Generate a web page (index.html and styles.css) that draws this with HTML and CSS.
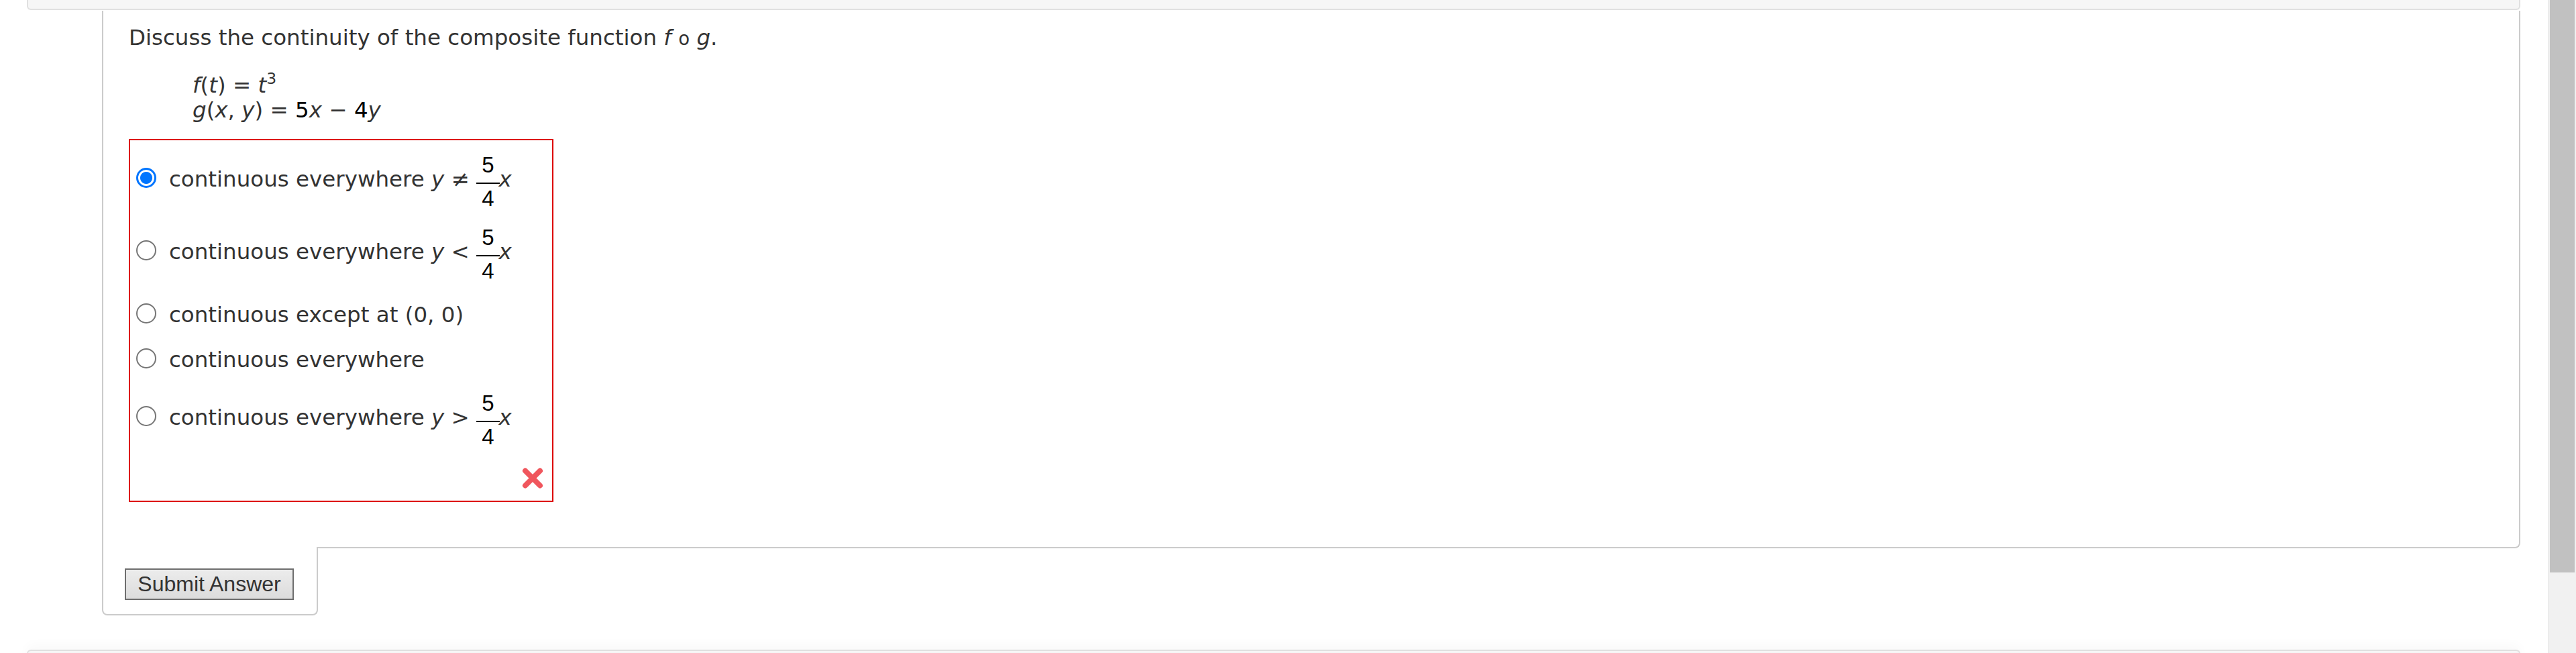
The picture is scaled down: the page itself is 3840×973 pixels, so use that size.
FILE: index.html
```html
<!DOCTYPE html>
<html lang="en">
<head>
<meta charset="utf-8">
<title>Question</title>
<link rel="stylesheet" href="styles.css">
</head>
<body>
<div class="page">
  <div class="content">
    <div class="prev-box"></div>
    <div class="question">
      <p class="prompt">Discuss the continuity of the composite function <i>f</i> <span class="compose">o</span> <i>g</i>.</p>
      <div class="equations">
        <div class="eq"><i>f</i>(<i>t</i>) = <i>t</i><sup>3</sup></div>
        <div class="eq"><i>g</i>(<i>x</i>, <i>y</i>) = <span class="n">5</span><i>x</i> &minus; <span class="n">4</span><i>y</i></div>
      </div>
      <div class="answers">
        <div class="opt opt-first"><span class="radio checked"></span>continuous everywhere <i>y</i> &ne; <span class="frac"><span class="num">5</span><span class="den">4</span></span><i>x</i></div>
        <div class="opt"><span class="radio"></span>continuous everywhere <i>y</i> &lt; <span class="frac"><span class="num">5</span><span class="den">4</span></span><i>x</i></div>
        <div class="opt"><span class="radio"></span>continuous except at (0, 0)</div>
        <div class="opt"><span class="radio"></span>continuous everywhere</div>
        <div class="opt opt-last"><span class="radio"></span>continuous everywhere <i>y</i> &gt; <span class="frac"><span class="num">5</span><span class="den">4</span></span><i>x</i></div>
        <div class="feedback">
          <svg class="wrong" width="34" height="33" viewBox="0 0 34 33" aria-label="incorrect">
            <path d="M6 5.5 L28 27.5 M28 5.5 L6 27.5" stroke="#f0565d" stroke-width="8" stroke-linecap="round"/>
          </svg>
        </div>
      </div>
    </div>
    <div class="submit-tab">
      <button class="submit" type="button">Submit Answer</button>
    </div>
    <div class="next-box"></div>
  </div>
  <div class="scrollbar"><div class="thumb"></div></div>
</div>
</body>
</html>
```

FILE: styles.css
```css
html, body {
  margin: 0;
  padding: 0;
  background: #fff;
  overflow: hidden;
}

.page {
  display: flex;
  width: 3840px;
  height: 973px;
  overflow: hidden;
}

.content {
  flex: 1;
  min-width: 0;
  display: flex;
  flex-direction: column;
  font-family: "DejaVu Sans", Verdana, sans-serif;
  font-size: 32.5px;
  color: #333;
}

.prev-box {
  height: 13px;
  margin: 0 41px 0 40px;
  background: #f6f6f6;
  border: 2px solid #e0e0e0;
  border-top: none;
  border-radius: 0 0 6px 6px;
  flex: none;
}

.question {
  margin: 1px 41px 0 152px;
  border: 2px solid #cbcbcb;
  border-top: none;
  border-radius: 0 0 8px 0;
  padding: 20px 37px 67px 38px;
  flex: none;
}

.prompt {
  margin: 0;
  line-height: 40px;
}

.compose {
  font-size: 0.85em;
}

.equations {
  margin: 31px 0 0 95px;
  line-height: 37px;
}

.eq sup {
  font-size: 0.72em;
  vertical-align: 0.55em;
  line-height: 0;
}

.n {
  color: #000;
}

.answers {
  margin-top: 24px;
  width: 633px;
  box-sizing: border-box;
  border: 2px solid #dd0000;
  padding: 19px 12px 17px 9px;
}

.opt {
  line-height: 40px;
  margin-bottom: 27px;
  white-space: nowrap;
}

.opt-first {
  margin-bottom: 22px;
}

.opt-last {
  margin-bottom: 0;
}

.radio {
  display: inline-block;
  box-sizing: border-box;
  width: 30px;
  height: 30px;
  border-radius: 50%;
  border: 2.5px solid #767676;
  background: #fff;
  vertical-align: -2px;
  margin-right: 19px;
}

.radio.checked {
  border: 3px solid #0075ff;
  background: radial-gradient(circle, #0075ff 0 8.5px, #fff 9.5px);
}

.frac {
  display: inline-flex;
  flex-direction: column;
  vertical-align: 21px;
  margin: 0 -1px 0 0;
  font-family: "Liberation Sans", Arial, sans-serif;
  font-size: 33px;
  color: #000;
}

.num {
  line-height: 36px;
  padding: 0 8px 8px;
  text-align: center;
}

.den {
  line-height: 36px;
  border-top: 2px solid #000;
  padding-top: 4px;
  text-align: center;
}

.feedback {
  display: flex;
  justify-content: flex-end;
  margin-top: 27px;
}

.wrong {
  display: block;
}

.submit-tab {
  flex: none;
  position: relative;
  z-index: 1;
  margin: -2px 0 0 152px;
  width: 322px;
  box-sizing: border-box;
  background: #fff;
  border: 2px solid #cbcbcb;
  border-top: none;
  border-radius: 0 0 8px 8px;
  padding: 32px 0 21px 32px;
}

.submit {
  display: block;
  width: 252px;
  height: 47px;
  box-sizing: border-box;
  margin: 0;
  padding: 0;
  border: 2px solid #6e6e6e;
  border-radius: 0;
  background: linear-gradient(#ececec, #dcdcdc);
  font-family: "Liberation Sans", Arial, sans-serif;
  font-size: 32px;
  line-height: 43px;
  color: #333;
}

.next-box {
  flex: none;
  height: 60px;
  margin: 51px 41px 0 40px;
  background: #f6f6f6;
  border: 2px solid #e0e0e0;
  border-bottom: none;
  border-radius: 6px 6px 0 0;
  box-shadow: 0 -8px 16px rgba(0, 0, 0, 0.025);
}

.scrollbar {
  flex: none;
  width: 42px;
  height: 973px;
  box-sizing: border-box;
  padding: 0 2px;
  background: #f1f1f1;
  border-left: 1px solid #e6e6e6;
}

.thumb {
  height: 853px;
  background: #c1c1c1;
}
```
